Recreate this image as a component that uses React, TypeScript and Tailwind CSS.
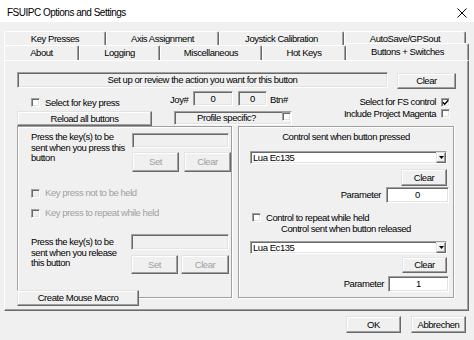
import React from "react";

const raised =
  "bg-[#f0f0f0] border border-t-[#e3e3e3] border-l-[#e3e3e3] border-r-[#696969] border-b-[#696969] shadow-[inset_-1px_-1px_0_#a0a0a0,inset_1px_1px_0_#ffffff]";
const sunken =
  "border border-t-[#a0a0a0] border-l-[#a0a0a0] border-r-white border-b-white shadow-[inset_1px_1px_0_#696969,inset_-1px_-1px_0_#e3e3e3]";
const etched =
  "border border-[#a0a0a0] shadow-[inset_1px_1px_0_#ffffff,1px_1px_0_#ffffff]";

function Btn({
  className,
  children,
  disabled,
}: {
  className: string;
  children: React.ReactNode;
  disabled?: boolean;
}) {
  return (
    <div
      className={`${raised} flex items-center justify-center leading-none ${
        disabled ? "text-[#a0a0a0]" : "text-black"
      } ${className}`}
    >
      {children}
    </div>
  );
}

function Check({ checked, disabled }: { checked?: boolean; disabled?: boolean }) {
  return (
    <div
      className={`w-[9px] h-[9px] shrink-0 flex items-center justify-center ${sunken} ${
        disabled ? "bg-[#f0f0f0]" : "bg-white"
      }`}
    >
      {checked && (
        <svg width="7" height="7" viewBox="0 0 7 7">
          <path d="M0.8 3.2 L2.7 5.2 L6.3 1.2" stroke="#000" strokeWidth="1.4" fill="none" />
        </svg>
      )}
    </div>
  );
}

function Dropdown({ value }: { value: string }) {
  return (
    <div className={`ml-[11px] w-[197px] h-[13px] bg-white flex items-center ${sunken}`}>
      <span className="pl-[2px] flex-1 leading-none">{value}</span>
      <div className={`${raised} w-[10px] h-[11px] flex items-center justify-center`}>
        <svg width="5" height="3" viewBox="0 0 5 3">
          <path d="M0 0 H5 L2.5 3 Z" fill="#000" />
        </svg>
      </div>
    </div>
  );
}

const tab =
  "flex items-center justify-center border-t border-l border-r border-t-white border-l-white border-r-[#696969] shadow-[inset_-1px_0_0_#a0a0a0] rounded-t-[2px] leading-none";

export default function App() {
  return (
    <div className="w-[474px] h-[340px] bg-[#f0f0f0] overflow-hidden text-[9.5px] tracking-[-0.45px] text-black font-['Liberation_Sans',Arial,sans-serif]">
      {/* Title bar */}
      <div className="h-[22px] bg-white flex items-center pl-[7px] pr-[7px] pt-[4px]">
        <span className="text-[10px] tracking-[-0.5px] leading-none">FSUIPC Options and Settings</span>
        <svg className="ml-auto" width="10" height="10" viewBox="0 0 10 10">
          <path d="M0.5 0.5 L9.5 9.5 M9.5 0.5 L0.5 9.5" stroke="#000" strokeWidth="1" />
        </svg>
      </div>

      {/* Tabs */}
      <div className="mt-[9px] flex h-[14px] pl-[4px]">
        <div className={`${tab} w-[102px]`}>Key Presses</div>
        <div className={`${tab} w-[113px]`}>Axis Assignment</div>
        <div className={`${tab} w-[125px]`}>Joystick Calibration</div>
        <div className={`${tab} w-[122px]`}>AutoSave/GPSout</div>
      </div>
      <div className="flex h-[15px] pl-[4px]">
        <div className={`${tab} w-[75px]`}>About</div>
        <div className={`${tab} w-[81px]`}>Logging</div>
        <div className={`${tab} w-[102px]`}>Miscellaneous</div>
        <div className={`${tab} w-[84px]`}>Hot Keys</div>
        <div
          className={`${tab} w-[123px] h-[17px] -mt-[2px] relative z-10 bg-[#f0f0f0] pb-[1px]`}
        >
          Buttons + Switches
        </div>
      </div>

      {/* Panel */}
      <div className="ml-[4px] w-[465px] h-[251px] border border-t-white border-l-white border-r-[#696969] border-b-[#696969] shadow-[inset_-1px_-1px_0_#a0a0a0] flex flex-col pl-[12px]">
        {/* Row A */}
        <div className="mt-[11px] flex items-start">
          <div className={`w-[371px] h-[16px] flex items-center justify-center leading-none ${sunken}`}>
            Set up or review the action you want for this button
          </div>
          <Btn className="ml-[9px] mt-[1px] w-[59px] h-[16px]">Clear</Btn>
        </div>

        {/* Rows B + C */}
        <div className="mt-[2px] flex">
          <div className="flex flex-col">
            <div className="flex items-start h-[15px]">
              <div className="w-[153px] h-[9px] mt-[7px] flex items-center pl-[14px]">
                <Check />
                <span className="ml-[5px] leading-none">Select for key press</span>
              </div>
              <div className="w-[23px] h-[15px] flex items-center pt-[2px] leading-none">Joy#</div>
              <div className={`w-[40px] h-[15px] flex items-center justify-center leading-none ${sunken}`}>0</div>
              <div className={`ml-[5px] w-[29px] h-[15px] flex items-center justify-center leading-none ${sunken}`}>0</div>
              <div className="ml-[3px] h-[15px] flex items-center pt-[2px] leading-none">Btn#</div>
            </div>
            <div className="mt-[5px] flex items-start">
              <Btn className="w-[135px] h-[15px]">Reload all buttons</Btn>
              <div className={`ml-[22px] w-[118px] h-[14px] flex items-start ${sunken}`}>
                <span className="flex-1 h-full flex items-center justify-center leading-none pr-[4px]">
                  Profile specific?
                </span>
                <Check />
              </div>
            </div>
          </div>
          <div className="ml-auto mr-[18px] flex flex-col items-end pt-[5px]">
            <div className="h-[12px] flex items-center">
              <span className="leading-none">Select for FS control</span>
              <div className="ml-[5px]">
                <Check checked />
              </div>
            </div>
            <div className="h-[11px] flex items-center">
              <span className="leading-none">Include Project Magenta</span>
              <div className="ml-[5px]">
                <Check />
              </div>
            </div>
          </div>
        </div>

        {/* Groups */}
        <div className="flex items-start">
          <div className="flex flex-col w-[215px]">
            <div className={`w-[215px] h-[172px] flex flex-col ${etched}`}>
              <div className="flex items-start">
                <div className="pl-[13px] w-[114px] pt-[5px] leading-[10.6px]">
                  Press the key(s) to be
                  <br />
                  sent when you press this
                  <br />
                  button
                </div>
                <div className="flex flex-col mt-[6px]">
                  <div className={`w-[97px] h-[15px] bg-[#f0f0f0] ${sunken}`} />
                  <div className="mt-[4px] flex">
                    <Btn disabled className="w-[47px] h-[20px]">Set</Btn>
                    <Btn disabled className="ml-[5px] w-[47px] h-[20px]">Clear</Btn>
                  </div>
                </div>
              </div>
              <div className="mt-[15px] h-[12px] flex items-center pl-[13px]">
                <Check disabled />
                <span className="ml-[5px] leading-none text-[#a0a0a0]">Key press not to be held</span>
              </div>
              <div className="mt-[8px] h-[12px] flex items-center pl-[13px]">
                <Check disabled />
                <span className="ml-[5px] leading-none text-[#a0a0a0]">Key press to repeat while held</span>
              </div>
              <div className="mt-[14px] flex items-start">
                <div className="pl-[13px] w-[113px] pt-[4px] leading-[10.6px]">
                  Press the key(s) to be
                  <br />
                  sent when you release
                  <br />
                  this button
                </div>
                <div className="flex flex-col mt-[1px]">
                  <div className={`w-[98px] h-[16px] bg-[#f0f0f0] ${sunken}`} />
                  <div className="mt-[5px] flex">
                    <Btn disabled className="w-[47px] h-[19px]">Set</Btn>
                    <Btn disabled className="ml-[3px] w-[48px] h-[19px]">Clear</Btn>
                  </div>
                </div>
              </div>
            </div>
            <Btn className="-mt-[8px] w-[122px] h-[16px] relative z-10">Create Mouse Macro</Btn>
          </div>

          <div className={`ml-[6px] w-[216px] h-[172px] flex flex-col ${etched}`}>
            <div className="mt-[4px] h-[12px] flex items-center justify-center leading-none">
              Control sent when button pressed
            </div>
            <div className="mt-[8px]">
              <Dropdown value="Lua Ec135" />
            </div>
            <Btn className="mt-[5px] self-end mr-[6px] w-[46px] h-[17px]">Clear</Btn>
            <div className="mt-[1px] self-end mr-[4px] flex items-center h-[16px]">
              <span className="leading-none">Parameter</span>
              <div className={`ml-[5px] w-[63px] h-[16px] bg-white flex items-center justify-center leading-none ${sunken}`}>
                0
              </div>
            </div>
            <div className="mt-[9px] ml-[13px] h-[11px] flex items-center">
              <Check />
              <span className="ml-[5px] leading-none">Control to repeat while held</span>
            </div>
            <div className="h-[12px] flex items-center justify-center leading-none">
              Control sent when button released
            </div>
            <div className="mt-[6px]">
              <Dropdown value="Lua Ec135" />
            </div>
            <Btn className="mt-[3px] self-end mr-[6px] w-[45px] h-[16px]">Clear</Btn>
            <div className="mt-[3px] self-end mr-[4px] flex items-center h-[16px]">
              <span className="leading-none">Parameter</span>
              <div className={`ml-[4px] w-[61px] h-[16px] bg-white flex items-center justify-center leading-none ${sunken}`}>
                1
              </div>
            </div>
          </div>
        </div>
      </div>

      {/* Bottom buttons */}
      <div className="mt-[5px] flex justify-end pr-[8px] gap-[10px]">
        <Btn className="w-[55px] h-[17px]">OK</Btn>
        <Btn className="w-[55px] h-[17px]">Abbrechen</Btn>
      </div>
    </div>
  );
}
